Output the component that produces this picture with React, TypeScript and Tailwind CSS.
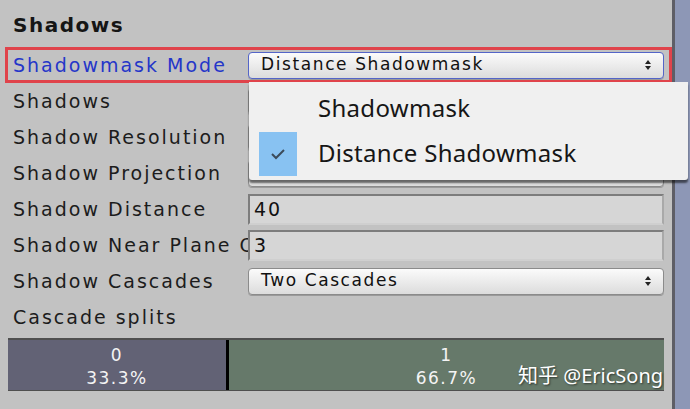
import React from 'react'

const label = "font-['DejaVu_Sans',sans-serif] text-[19px] tracking-[2px] text-[#1c1c1c] whitespace-nowrap overflow-hidden"

function Arrows() {
    return (
        <svg width="8" height="12" viewBox="0 0 8 12" className="shrink-0">
            <path d="M4 1 L7 5 L1 5 Z" fill="#222" />
            <path d="M4 11 L7 7 L1 7 Z" fill="#222" />
        </svg>
    )
}

function Dropdown({ value, focused }: { value: string; focused?: boolean }) {
    return (
        <div
            className={
                'flex h-[27px] w-[416px] items-center justify-between rounded-[4px] border bg-gradient-to-b from-[#fbfbfb] to-[#dcdcdc] pl-[12px] pr-[11px] shadow-[0_1px_0_#9a9a9a] ' +
                (focused ? 'border-[#5465c8] shadow-[0_0_0_1px_#8f9be0]' : 'border-[#8b8b8b]')
            }
        >
            <span className="font-['DejaVu_Sans',sans-serif] text-[17px] tracking-[1.6px] text-[#111]">{value}</span>
            <Arrows />
        </div>
    )
}

function Field({ value }: { value: string }) {
    return (
        <div className="flex h-[31px] w-[416px] items-center border-2 border-[#7d7d7d] border-b-[#cfcfcf] border-r-[#a9a9a9] bg-[#d6d6d6] pl-[4px]">
            <span className="font-['DejaVu_Sans',sans-serif] text-[19px] tracking-[1.8px] text-[#111]">{value}</span>
        </div>
    )
}

function Row({ name, children, blue }: { name: string; children?: React.ReactNode; blue?: boolean }) {
    return (
        <div className="flex h-[36px] items-center">
            <div className={label + ' w-[248px] shrink-0 pl-[13px] ' + (blue ? 'text-[#2536c9]' : '')}>{name}</div>
            {children}
        </div>
    )
}

export default function App() {
    return (
        <div className="flex h-[409px] w-[690px] overflow-hidden bg-[#c2c2c2]">
            <div className="relative flex w-[672px] flex-col">
                <div className="flex h-[47px] items-center pl-[13px] pt-[2px] font-['DejaVu_Sans',sans-serif] text-[20px] font-bold tracking-[1.5px] text-[#151515]">
                    Shadows
                </div>
                <div className="relative">
                    <div className="absolute left-[5px] right-0 top-0 h-[36px] border-[3px] border-[#e0434b]" />
                    <Row name="Shadowmask Mode" blue>
                        <Dropdown value="Distance Shadowmask" focused />
                    </Row>
                </div>
                <Row name="Shadows">
                    <Dropdown value="Hard and Soft Shadows" />
                </Row>
                <Row name="Shadow Resolution">
                    <Dropdown value="High Resolution" />
                </Row>
                <Row name="Shadow Projection">
                    <Dropdown value="Stable Fit" />
                </Row>
                <Row name="Shadow Distance">
                    <Field value="40" />
                </Row>
                <Row name="Shadow Near Plane Offset">
                    <Field value="3" />
                </Row>
                <Row name="Shadow Cascades">
                    <Dropdown value="Two Cascades" />
                </Row>
                <Row name="Cascade splits" />
                <div className="relative ml-[8px] mt-[3px] flex h-[53px] w-[656px] flex-col bg-[#4f4f4f] py-[2px]">
                    <div className="h-[2px] bg-[#f2f2f2]" />
                    <div className="flex flex-1 font-['DejaVu_Sans',sans-serif] text-[17px] leading-[23px] tracking-[1.5px] text-[#f4f4f4]">
                        <div className="flex w-[218px] flex-col items-center justify-center bg-[#626275] pt-[4px]">
                            <span>0</span>
                            <span>33.3%</span>
                        </div>
                        <div className="w-[3px] bg-black" />
                        <div className="flex flex-1 flex-col items-center justify-center bg-[#66796a] pt-[4px]">
                            <span>1</span>
                            <span>66.7%</span>
                        </div>
                    </div>
                    <div className="h-[2px] bg-[#f2f2f2]" />
                    <div className="absolute bottom-[3px] left-[510px] whitespace-nowrap font-['Noto_Sans','Noto_Sans_CJK_SC',sans-serif] text-[20px] leading-[24px] text-white [text-shadow:1px_1px_2px_rgba(0,0,0,0.55)]">
                        知乎 @EricSong
                    </div>
                </div>
                <div className="absolute left-[249px] top-[82px] z-10 flex h-[98px] w-[439px] flex-col justify-center gap-[2px] rounded-b-[3px] bg-[#f0f0f0] pl-[10px] shadow-[0_3px_2px_rgba(0,0,0,0.55)] font-['Noto_Sans',sans-serif] text-[24px] tracking-[0.3px] text-[#161616]">
                    <div className="flex h-[44px] items-center">
                        <div className="w-[59px]" />
                        <span>Shadowmask</span>
                    </div>
                    <div className="flex h-[44px] items-center">
                        <div className="mr-[21px] flex h-[44px] w-[38px] items-center justify-center bg-[#88c2f2]">
                            <svg width="16" height="12" viewBox="0 0 16 12">
                                <path d="M2 6 L6 10 L14 2" stroke="#3b4a5a" strokeWidth="2" fill="none" />
                            </svg>
                        </div>
                        <span className="-mt-[3px]">Distance Shadowmask</span>
                    </div>
                </div>
            </div>
            <div className="w-[3px] bg-[#5e5e66]" />
            <div className="flex-1 bg-[#8d97b6]" />
        </div>
    )
}
